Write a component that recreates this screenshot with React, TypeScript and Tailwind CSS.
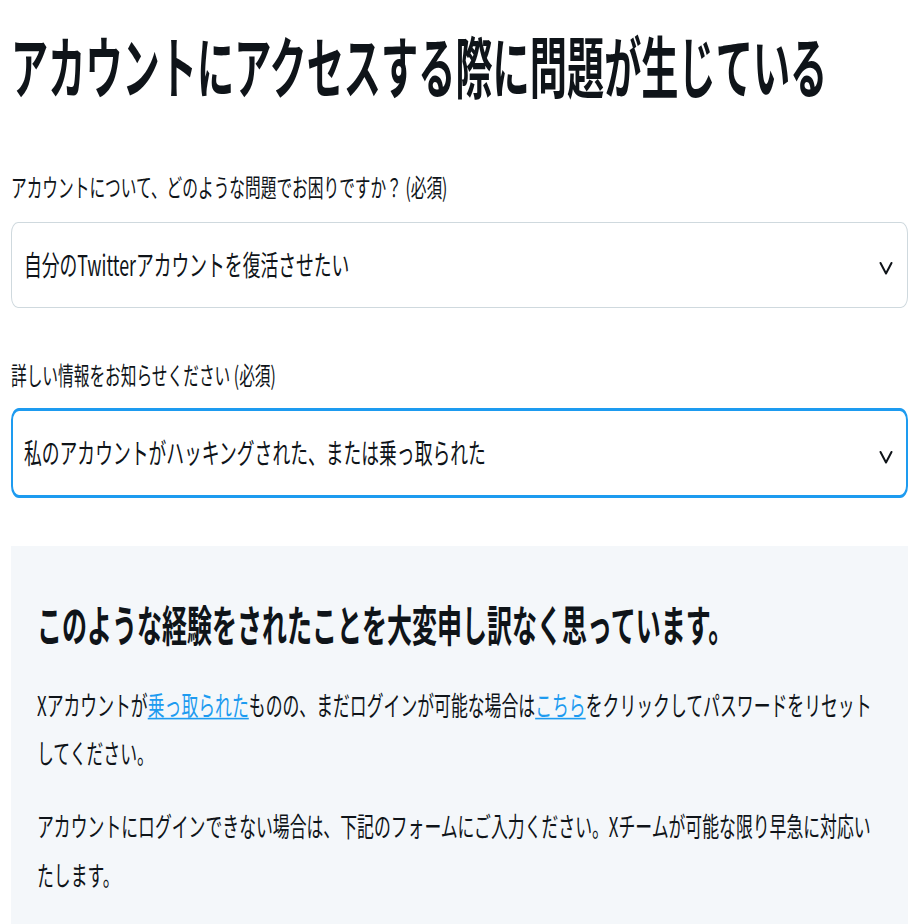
function Chevron({ className }: { className: string }) {
  return (
    <svg width="14" height="14" viewBox="0 0 14 14" fill="none" className={className}>
      <path d="M1.5 2 L7 12.5 L12.5 2" stroke="#0f1419" strokeWidth="2" strokeLinecap="round" strokeLinejoin="round" />
    </svg>
  );
}

export default function App() {
  return (
    <div className="h-[924px] w-[924px] overflow-hidden bg-white pl-[11px] pr-[16px] font-['Noto_Sans_CJK_JP','Noto_Sans',sans-serif] text-[#0f1419]">
      <div className="flex h-[132px] items-center">
        <h1 className="block scale-y-[1.8] whitespace-nowrap text-[37.2px] font-bold leading-none">
          アカウントにアクセスする際に問題が生じている
        </h1>
      </div>

      <div className="mt-[35px] flex h-[40px] items-center">
        <span className="block scale-y-[1.6] whitespace-nowrap text-[15.7px] leading-none">
          アカウントについて、どのような問題でお困りですか？ (必須)
        </span>
      </div>

      <div className="mt-[15px] flex h-[86px] items-center justify-between rounded-[7px/11px] border border-[#cfd9de] bg-white pl-[12px] pr-[14px]">
        <span className="block scale-y-[1.6] whitespace-nowrap text-[17.8px] leading-none">
          自分のTwitterアカウントを復活させたい
        </span>
        <Chevron className="mt-[6px] shrink-0" />
      </div>

      <div className="mt-[47px] flex h-[40px] items-center">
        <span className="block scale-y-[1.6] whitespace-nowrap text-[15.7px] leading-none">
          詳しい情報をお知らせください (必須)
        </span>
      </div>

      <div className="mt-[13px] flex h-[90px] items-center justify-between rounded-[8px/12px] border-x-2 border-y-[3px] border-[#1d9bf0] bg-white pl-[11px] pr-[13px]">
        <span className="block scale-y-[1.6] whitespace-nowrap text-[17.8px] leading-none">
          私のアカウントがハッキングされた、または乗っ取られた
        </span>
        <Chevron className="mt-[7px] shrink-0" />
      </div>

      <div className="mt-[48px] h-[420px] bg-[#f4f7fa] pl-[26px] pr-[22px] pt-[57px]">
        <div className="flex h-[40px] items-center">
          <h2 className="block scale-y-[1.75] whitespace-nowrap text-[25px] font-bold leading-none">
            このような経験をされたことを大変申し訳なく思っています。
          </h2>
        </div>

        <div className="mt-[38px] h-[98px]">
          <p className="origin-top scale-y-[1.6] text-[16.85px] leading-[30.4px]">
            Xアカウントが
            <a className="text-[#1d9bf0] underline" href="#">乗っ取られた</a>
            ものの、まだログインが可能な場合は
            <a className="text-[#1d9bf0] underline" href="#">こちら</a>
            をクリックしてパスワードをリセットしてください。
          </p>
        </div>

        <div className="mt-[21px] h-[98px]">
          <p className="origin-top scale-y-[1.6] text-[16.85px] leading-[31px]">
            アカウントにログインできない場合は、下記のフォームにご入力ください。Xチームが可能な限り早急に対応いたします。
          </p>
        </div>
      </div>
    </div>
  );
}
